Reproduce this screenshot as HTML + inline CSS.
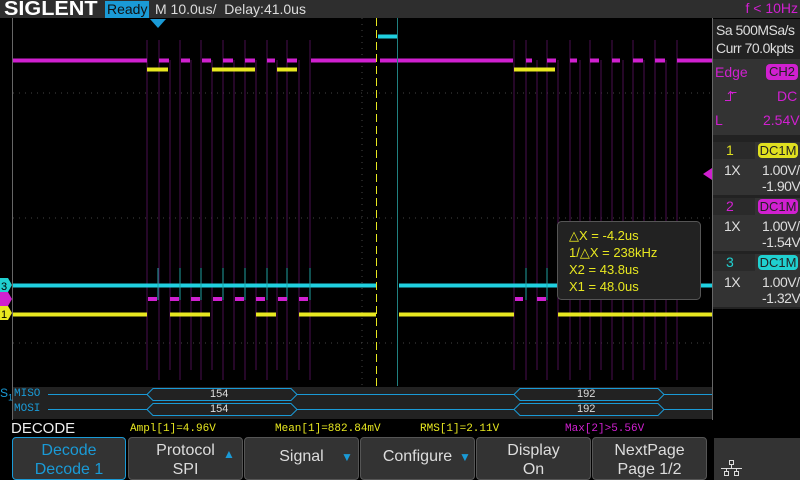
<!DOCTYPE html>
<html><head><meta charset="utf-8"><style>
*{margin:0;padding:0;box-sizing:border-box}
body{width:800px;height:480px;background:#000;overflow:hidden;position:relative;font-family:"Liberation Sans",sans-serif;white-space:nowrap}
.a{position:absolute}
.btn{position:absolute;top:437px;height:43px;background:#333;border:1px solid #555;border-radius:4px;color:#ddd;font-size:16px;text-align:center;line-height:19px;padding-top:3px}
.rp{color:#ddd;font-size:14px;letter-spacing:-0.5px}
</style></head><body>
<div class="a" style="left:0;top:0;width:800px;height:18px;background:#2e2e2e"></div>
<div class="a" style="left:4px;top:-2px;color:#fff;font-size:20px;font-weight:bold;transform:scaleX(1.08);transform-origin:left">SIGLENT</div>
<div class="a" style="left:105px;top:1px;width:44px;height:17px;background:#1a9ad6;color:#111;font-size:14px;line-height:17px;padding-left:2px">Ready</div>
<div class="a" style="left:155px;top:1px;color:#ddd;font-size:14px">M 10.0us/&nbsp; Delay:41.0us</div>
<div class="a" style="left:713px;top:0;width:87px;height:18px;background:#2e2e2e;color:#d020d0;font-size:14px;text-align:right;padding-right:2px">f &lt; 10Hz</div>
<!-- right panel -->
<div class="a" style="left:713px;top:19px;width:87px;height:419px;background:#222"></div>
<div class="a rp" style="left:716px;top:22px">Sa 500MSa/s</div>
<div class="a rp" style="left:716px;top:40px">Curr 70.0kpts</div>
<div class="a" style="left:713px;top:59px;width:87px;height:76px;background:#333"></div>
<div class="a" style="left:715px;top:64px;color:#d020d0;font-size:14px">Edge</div>
<div class="a" style="left:766px;top:64px;width:32px;height:16px;background:#d020d0;border-radius:4px;color:#222;font-size:13px;text-align:center;line-height:16px">CH2</div>
<div class="a" style="left:777px;top:88px;color:#d020d0;font-size:14px">DC</div>
<div class="a" style="left:715px;top:112px;color:#d020d0;font-size:14px">L</div>
<div class="a" style="left:763px;top:112px;color:#d020d0;font-size:14px">2.54V</div>
<!-- channel boxes -->
<div class="a" style="left:713px;top:142px;width:87px;height:53px;background:#333"></div>
<div class="a" style="left:713px;top:142px;width:42px;height:17px;background:#2a2a2a;color:#e0e020;font-size:14px;padding-left:13px">1</div>
<div class="a" style="left:758px;top:143px;width:40px;height:15px;background:#e0e020;border-radius:4px;color:#222;font-size:13px;text-align:center;line-height:15px">DC1M</div>
<div class="a rp" style="left:724px;top:162px">1X</div><div class="a rp" style="left:762px;top:162px">1.00V/</div><div class="a rp" style="left:762px;top:178px">-1.90V</div>
<div class="a" style="left:713px;top:198px;width:87px;height:53px;background:#333"></div>
<div class="a" style="left:713px;top:198px;width:42px;height:17px;background:#2a2a2a;color:#d020d0;font-size:14px;padding-left:13px">2</div>
<div class="a" style="left:758px;top:199px;width:40px;height:15px;background:#d020d0;border-radius:4px;color:#222;font-size:13px;text-align:center;line-height:15px">DC1M</div>
<div class="a rp" style="left:724px;top:218px">1X</div><div class="a rp" style="left:762px;top:218px">1.00V/</div><div class="a rp" style="left:762px;top:234px">-1.54V</div>
<div class="a" style="left:713px;top:254px;width:87px;height:53px;background:#333"></div>
<div class="a" style="left:713px;top:254px;width:42px;height:17px;background:#2a2a2a;color:#20d0d0;font-size:14px;padding-left:13px">3</div>
<div class="a" style="left:758px;top:255px;width:40px;height:15px;background:#20d0d0;border-radius:4px;color:#222;font-size:13px;text-align:center;line-height:15px">DC1M</div>
<div class="a rp" style="left:724px;top:274px">1X</div><div class="a rp" style="left:762px;top:274px">1.00V/</div><div class="a rp" style="left:762px;top:290px">-1.32V</div>
<div class="a" style="left:713px;top:309px;width:87px;height:129px;background:#000"></div>
<svg class="a" style="left:0;top:0" width="800" height="480">
<g stroke="#d020d0" fill="none"><path d="M725 100.5h5.5V92.5h6"/><path d="M733 94l-2.5 -2.5l-2.5 2.5" /></g>
<g stroke="#444" stroke-dasharray="1 5" stroke-width="1">
<line x1="13" y1="93" x2="712" y2="93"/><line x1="13" y1="218" x2="712" y2="218"/><line x1="13" y1="343" x2="712" y2="343"/>
<line x1="362" y1="18" x2="362" y2="386"/>
</g>
<line x1="12.5" y1="18" x2="12.5" y2="420" stroke="#666"/>
<line x1="712.5" y1="18" x2="712.5" y2="420" stroke="#666"/>
<polygon points="150,19 166,19 158,28" fill="#1a9ad6"/>
<polygon points="712,168 703,174 712,180" fill="#d020d0"/>
<g stroke="#4a0e50" stroke-width="1">
<path d="M147 40V370M159 40V380M170 60V370M180 40V380M191 60V370M201 40V380M212 60V370M223 40V380M234 60V370M245 40V380M256 60V370M267 40V380M277 60V370M287 40V380M299 60V370M310 40V380M514 40V370M526 40V380M537 60V370M547 40V380M558 60V370M570 40V380M580 60V370M590 40V380M601 60V370M612 40V380M623 60V370M633 40V380M644 60V370M655 40V380M666 60V370M677 40V380"/>
</g>
<g stroke="#d020d0" stroke-width="4">
<path d="M13 60.5H147M159 60.5H169M181 60.5H190M202 60.5H211M223 60.5H233M245 60.5H255M267 60.5H275M287 60.5H297M311 60.5H376M380 60.5H513M526 60.5H532M547 60.5H556M570 60.5H577M590 60.5H599M612 60.5H620M633 60.5H643M655 60.5H665M677 60.5H712"/>
</g>
<g stroke="#e8e820" stroke-width="4">
<path d="M147 69.5H168M212 69.5H255M277 69.5H297M514 69.5H555"/>
<path d="M13 314.5H147M170 314.5H210M256 314.5H276M299 314.5H376M399 314.5H514M558 314.5H712"/>
</g>
<path d="M378 36.5H397" stroke="#20d0e0" stroke-width="4"/>
<path d="M13 285.5H376M399 285.5H712" stroke="#20d0e0" stroke-width="4"/>
<g stroke="#20a0a0" stroke-width="1"><path d="M158 268V300M180 268V300M201 268V300M223 268V300M245 268V300M267 268V300M287 268V300M310 268V300M526 268V300M547 268V300"/></g>
<g stroke="#d020d0" stroke-width="4">
<path d="M148 299H157M170 299H179M191 299H200M213 299H222M235 299H244M256 299H265M278 299H287M299 299H308M515 299H523M537 299H546"/>
</g>
<line x1="376.5" y1="18" x2="376.5" y2="386" stroke="#e8e820" stroke-dasharray="8 4"/>
<line x1="397.5" y1="18" x2="397.5" y2="386" stroke="#208080"/>
<polygon points="0,278 8,278 12,285 8,292 0,292" fill="#20d0d0"/><text x="1" y="290" font-size="11" fill="#000" font-family="Liberation Sans">3</text>
<polygon points="0,292 8,292 12,299 8,306 0,306" fill="#d020d0"/>
<polygon points="0,306 8,306 12,313 8,320 0,320" fill="#e8e820"/><text x="1" y="318" font-size="11" fill="#000" font-family="Liberation Sans">1</text>
<rect x="13" y="387" width="699" height="32" fill="#222"/>
<g stroke="#1a9ad6" stroke-width="1" fill="none">
<path d="M48 394.5H147l6-6h138l6 6h217l6-6h138l6 6h48"/>
<path d="M147 394.5l6 6h138l6-6M514 394.5l6 6h138l6-6"/>
<path d="M48 409.5H147l6-6h138l6 6h217l6-6h138l6 6h48"/>
<path d="M147 409.5l6 6h138l6-6M514 409.5l6 6h138l6-6"/>
</g>
<rect x="557.5" y="221.5" width="143" height="78" rx="4" fill="#222" stroke="#555"/>
</svg>
<div class="a" style="left:569px;top:227px;color:#e8e820;font-size:13px;line-height:17px">△X = -4.2us<br>1/△X = 238kHz<br>X2 = 43.8us<br>X1 = 48.0us</div>
<div class="a" style="left:0px;top:386px;color:#1a9ad6;font-size:12px">S<sub style="font-size:9px">1</sub></div>
<div class="a" style="left:14px;top:388px;color:#1a9ad6;font-size:11px;font-family:'Liberation Mono',monospace">MISO</div>
<div class="a" style="left:14px;top:403px;color:#1a9ad6;font-size:11px;font-family:'Liberation Mono',monospace">MOSI</div>
<div class="a" style="left:210px;top:388px;color:#ddd;font-size:11px">154</div>
<div class="a" style="left:210px;top:403px;color:#ddd;font-size:11px">154</div>
<div class="a" style="left:577px;top:388px;color:#ddd;font-size:11px">192</div>
<div class="a" style="left:577px;top:403px;color:#ddd;font-size:11px">192</div>
<div class="a" style="left:11px;top:420px;color:#eee;font-size:15px">DECODE</div>
<div class="a" style="left:130px;top:423px;color:#e8e820;font-size:11px;font-family:'Liberation Mono',monospace">Ampl[1]=4.96V</div>
<div class="a" style="left:275px;top:423px;color:#e8e820;font-size:11px;font-family:'Liberation Mono',monospace">Mean[1]=882.84mV</div>
<div class="a" style="left:420px;top:423px;color:#e8e820;font-size:11px;font-family:'Liberation Mono',monospace">RMS[1]=2.11V</div>
<div class="a" style="left:565px;top:423px;color:#d020d0;font-size:11px;font-family:'Liberation Mono',monospace">Max[2]&gt;5.56V</div>
<div class="a" style="left:714px;top:438px;width:86px;height:42px;background:#333"></div>
<svg class="a" style="left:714px;top:438px" width="86" height="42"><g stroke="#ddd" fill="none" stroke-width="1"><rect x="15.5" y="22.5" width="4" height="4"/><path d="M17.5 26.5v4M7 30.5h21M12.5 30.5v3M22.5 30.5v3"/><rect x="10.5" y="33.5" width="4" height="4"/><rect x="20.5" y="33.5" width="4" height="4"/></g></svg>
<div class="btn" style="left:12px;width:114px;border-color:#1a9ad6;color:#1a9ad6">Decode<br>Decode 1</div>
<div class="btn" style="left:128px;width:115px">Protocol<br>SPI<span class="a" style="left:94px;top:7px;color:#1a9ad6;font-size:12px">▲</span></div>
<div class="btn" style="left:244px;width:115px;line-height:37px;padding-top:0">Signal<span class="a" style="left:96px;top:12px;color:#1a9ad6;font-size:12px;line-height:14px">▼</span></div>
<div class="btn" style="left:360px;width:115px;line-height:37px;padding-top:0">Configure<span class="a" style="left:98px;top:12px;color:#1a9ad6;font-size:12px;line-height:14px">▼</span></div>
<div class="btn" style="left:476px;width:115px">Display<br>On</div>
<div class="btn" style="left:592px;width:115px">NextPage<br>Page 1/2</div>
</body></html>
